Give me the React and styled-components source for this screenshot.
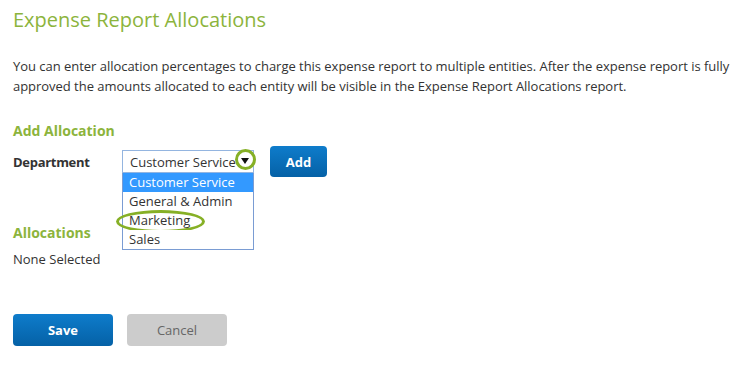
import React from "react";
import styled, { createGlobalStyle } from "styled-components";

const Global = createGlobalStyle`
  html, body { margin: 0; padding: 0; background: #fff; }
  body { font-family: "Open Sans", "Liberation Sans", sans-serif; color: #333; }
`;

const Page = styled.div`
  padding: 8px 4px 20px 13px;
  width: 741px;
  box-sizing: border-box;
`;

const Title = styled.h1`
  margin: 0;
  font-size: 20px;
  font-weight: 400;
  line-height: 24px;
  color: #8cb43c;
`;

const Intro = styled.p`
  margin: 24px 0 0 0;
  font-size: 13px;
  line-height: 20px;
  color: #333;
  letter-spacing: -0.03px;
`;

const Section = styled.h2`
  margin: ${(p) => p.$top}px 0 0 0;
  font-size: 14px;
  font-weight: 700;
  line-height: 18px;
  color: #8cb43c;
`;

const FormRow = styled.div`
  display: flex;
  align-items: center;
  margin-top: 6px;
`;

const Label = styled.div`
  width: 109px;
  font-size: 13px;
  font-weight: 700;
  letter-spacing: -0.3px;
  color: #333;
`;

const SelectWrap = styled.div`
  position: relative;
  width: 132px;
`;

const SelectBox = styled.div`
  box-sizing: border-box;
  height: 23px;
  border: 1px solid #94b5e0;
  display: flex;
  align-items: center;
  padding-left: 7px;
  font-size: 13px;
  color: #333;
  white-space: nowrap;
  overflow: hidden;
  background: #fff;
`;

const Arrow = styled.span`
  position: absolute;
  right: 5px;
  top: 8px;
  width: 0;
  height: 0;
  border-left: 4px solid transparent;
  border-right: 4px solid transparent;
  border-top: 6px solid #111;
`;

const Ring = styled.span`
  position: absolute;
  box-sizing: border-box;
  border: 3.5px solid #86b026;
  border-radius: 50%;
  pointer-events: none;
`;

const ArrowRing = styled(Ring)`
  right: -2px;
  top: -1px;
  width: 21px;
  height: 21px;
`;

const List = styled.ul`
  position: absolute;
  left: 0;
  top: 23px;
  width: 132px;
  box-sizing: border-box;
  margin: 0;
  padding: 0;
  list-style: none;
  border: 1px solid #7a9cd3;
  border-top: none;
  background: #fff;
  z-index: 2;
`;

const Item = styled.li`
  height: 19px;
  line-height: 19px;
  padding-left: 6px;
  font-size: 13px;
  color: ${(p) => (p.$active ? "#fff" : "#333")};
  background: ${(p) => (p.$active ? "#3399ff" : "#fff")};
  white-space: nowrap;
  position: relative;
`;

const ItemRing = styled(Ring)`
  left: -7px;
  top: -1px;
  width: 89px;
  height: 23px;
`;

const Button = styled.button`
  box-sizing: border-box;
  width: ${(p) => p.$w}px;
  height: ${(p) => p.$h}px;
  border: none;
  border-radius: 4px;
  font-family: "Open Sans", "Liberation Sans", sans-serif;
  font-size: 13px;
  font-weight: ${(p) => (p.$primary ? 700 : 400)};
  color: ${(p) => (p.$primary ? "#fff" : "#666")};
  background: ${(p) =>
    p.$primary ? "linear-gradient(#0e7ccb, #0561a6)" : "#cccccc"};
  padding: 0;
  cursor: pointer;
`;

const AddButton = styled(Button)`
  margin-left: 16px;
`;

const None = styled.div`
  margin-top: 8px;
  font-size: 13px;
  line-height: 18px;
  color: #333;
`;

const Actions = styled.div`
  display: flex;
  gap: 14px;
  margin-top: 46px;
`;

const options = ["Customer Service", "General & Admin", "Marketing", "Sales"];

export default function App() {
  return (
    <>
      <Global />
      <Page>
        <Title>Expense Report Allocations</Title>
        <Intro>
          You can enter allocation percentages to charge this expense report to
          multiple entities. After the expense report is fully approved the
          amounts allocated to each entity will be visible in the Expense Report
          Allocations report.
        </Intro>
        <Section $top={26}>Add Allocation</Section>
        <FormRow>
          <Label>Department</Label>
          <SelectWrap>
            <SelectBox>Customer Service</SelectBox>
            <Arrow />
            <ArrowRing />
            <List>
              {options.map((o, i) => (
                <Item key={o} $active={i === 0}>
                  {o}
                  {o === "Marketing" && <ItemRing />}
                </Item>
              ))}
            </List>
          </SelectWrap>
          <AddButton $primary $w={57} $h={31}>
            Add
          </AddButton>
        </FormRow>
        <Section $top={47}>Allocations</Section>
        <None>None Selected</None>
        <Actions>
          <Button $primary $w={100} $h={32}>
            Save
          </Button>
          <Button $w={100} $h={32}>
            Cancel
          </Button>
        </Actions>
      </Page>
    </>
  );
}
